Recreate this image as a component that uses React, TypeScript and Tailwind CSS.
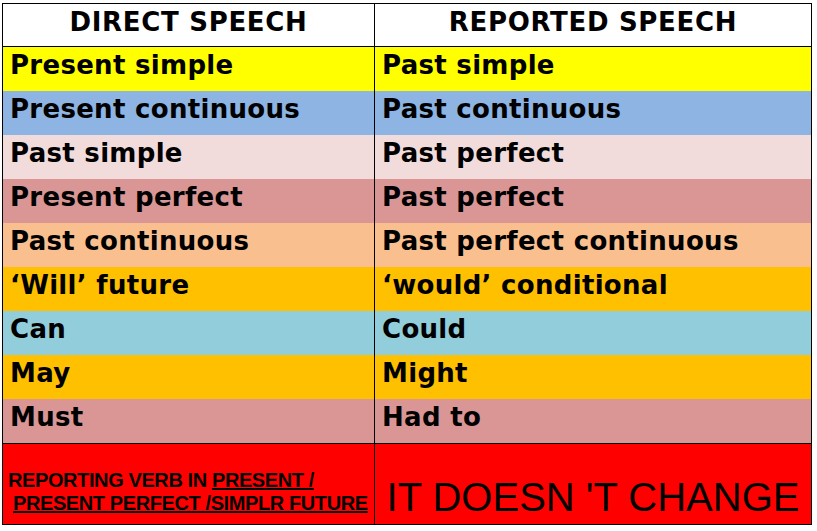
import React from "react";

const rows: { left: string; right: string; bg: string }[] = [
  { left: "Present simple", right: "Past simple", bg: "bg-[#ffff00]" },
  { left: "Present continuous", right: "Past continuous", bg: "bg-[#8db4e2]" },
  { left: "Past simple", right: "Past perfect", bg: "bg-[#f2dcdb]" },
  { left: "Present perfect", right: "Past perfect", bg: "bg-[#da9694]" },
  { left: "Past continuous", right: "Past perfect continuous", bg: "bg-[#fabf8f]" },
  { left: "\u2018Will\u2019 future", right: "\u2018would\u2019 conditional", bg: "bg-[#ffc000]" },
  { left: "Can", right: "Could", bg: "bg-[#92cddc]" },
  { left: "May", right: "Might", bg: "bg-[#ffc000]" },
  { left: "Must", right: "Had to", bg: "bg-[#da9694]" },
];

export default function App() {
  return (
    <div className="w-[817px] h-[531px] bg-white overflow-hidden pt-[3px] pl-[2px]">
      <div className="w-[810px] border border-black text-black font-['DejaVu_Sans',Verdana,sans-serif] font-bold text-[26px]">
        {/* header */}
        <div className="grid grid-cols-[372px_436px] h-[43px] border-b border-black bg-white tracking-[0.7px]">
          <div className="border-r border-black text-center leading-[36px]">DIRECT SPEECH</div>
          <div className="text-center leading-[36px]">REPORTED SPEECH</div>
        </div>

        {rows.map((r, i) => (
          <div key={i} className={`grid grid-cols-[372px_436px] h-[44px] tracking-[0.3px] ${r.bg}`}>
            <div className="border-r border-black pl-[7px] leading-[36px] whitespace-nowrap">{r.left}</div>
            <div className="pl-[7px] leading-[36px] whitespace-nowrap">{r.right}</div>
          </div>
        ))}

        {/* reporting verb row */}
        <div className="grid grid-cols-[372px_436px] h-[81px] border-t border-black bg-[#ff0000] font-normal">
          <div className="border-r border-black flex flex-col justify-end pb-[9px] pl-[5px] font-['Liberation_Sans',Arial,sans-serif] font-bold text-[20px] leading-[23px] tracking-[-0.4px] whitespace-nowrap">
            <span>
              REPORTING VERB IN <span className="underline">PRESENT /</span>
            </span>
            <span className="underline pl-[5px]">PRESENT PERFECT /SIMPLR FUTURE</span>
          </div>
          <div className="flex flex-col justify-end items-center pb-[7px] font-['Liberation_Sans',Arial,sans-serif] text-[40px] leading-[40px] whitespace-nowrap">
            IT DOESN 'T CHANGE
          </div>
        </div>
      </div>
    </div>
  );
}
